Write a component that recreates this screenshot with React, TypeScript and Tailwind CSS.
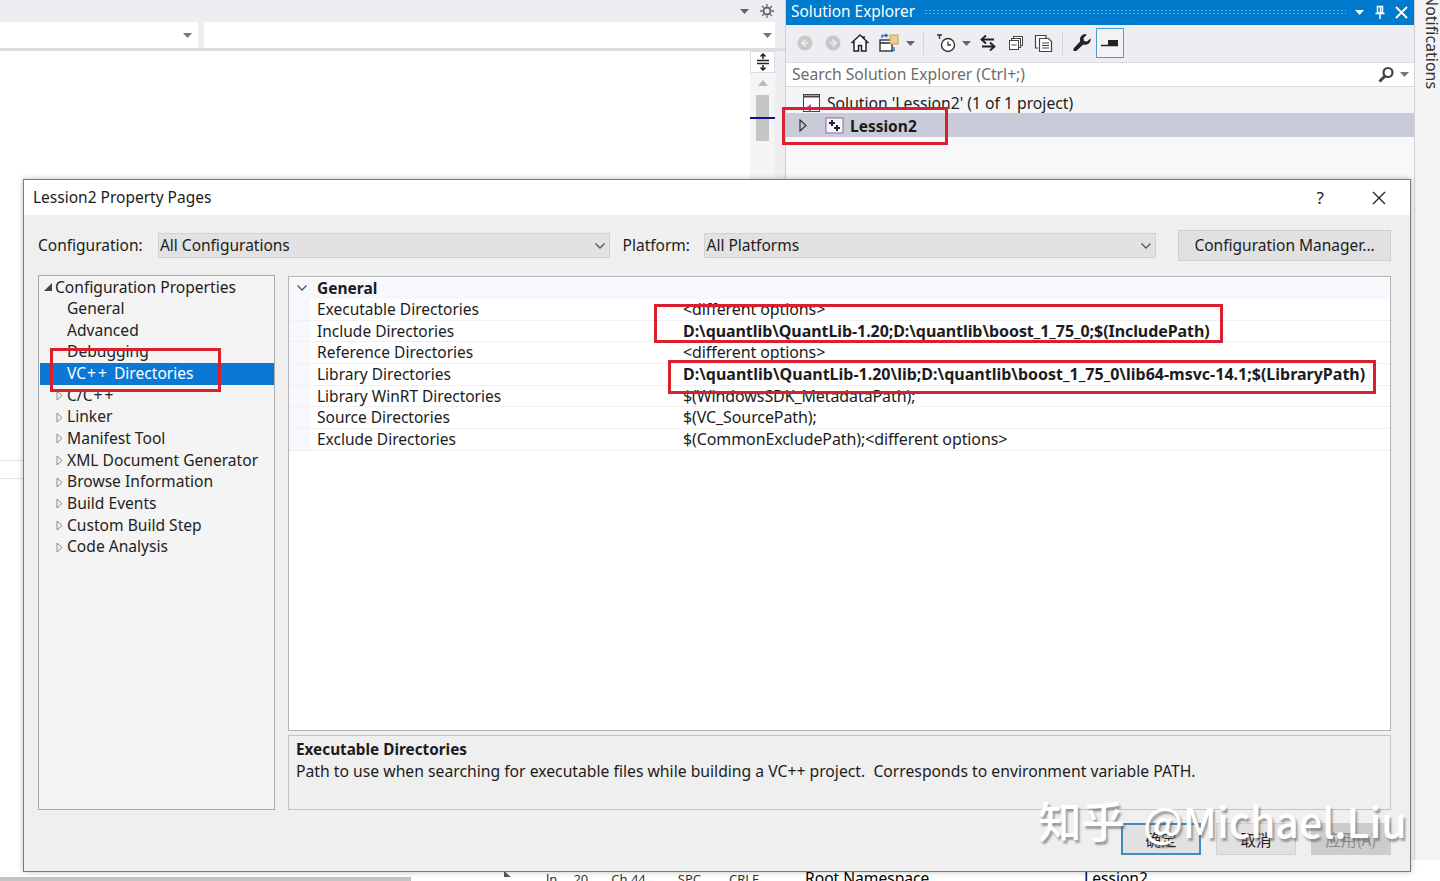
import React from "react";

const font = { fontFamily: '"Noto Sans","Noto Sans CJK SC",sans-serif' };

const treeItems = [
  { t: "General", a: false },
  { t: "Advanced", a: false },
  { t: "Debugging", a: false },
  { t: "VC++ Directories", a: false, sel: true },
  { t: "C/C++", a: true },
  { t: "Linker", a: true },
  { t: "Manifest Tool", a: true },
  { t: "XML Document Generator", a: true },
  { t: "Browse Information", a: true },
  { t: "Build Events", a: true },
  { t: "Custom Build Step", a: true },
  { t: "Code Analysis", a: true },
];

const props = [
  { k: "Executable Directories", v: "<different options>", c: "tracking-[-0.1px]" },
  { k: "Include Directories", v: "D:\\quantlib\\QuantLib-1.20;D:\\quantlib\\boost_1_75_0;$(IncludePath)", c: "font-bold tracking-[-0.07px]" },
  { k: "Reference Directories", v: "<different options>", c: "tracking-[-0.1px]" },
  { k: "Library Directories", v: "D:\\quantlib\\QuantLib-1.20\\lib;D:\\quantlib\\boost_1_75_0\\lib64-msvc-14.1;$(LibraryPath)", c: "font-bold" },
  { k: "Library WinRT Directories", v: "$(WindowsSDK_MetadataPath);", c: "tracking-[-0.1px]" },
  { k: "Source Directories", v: "$(VC_SourcePath);", c: "tracking-[-0.1px]" },
  { k: "Exclude Directories", v: "$(CommonExcludePath);<different options>", c: "tracking-[-0.1px]" },
];

function PlusText({ t }: { t: string }) {
  const i = t.indexOf("++");
  if (i < 0) return <>{t}</>;
  return (
    <>
      {t.slice(0, i)}
      <span className="px-[1px] tracking-[2px]">++</span>
      {t.slice(i + 2)}
    </>
  );
}

function Chevron() {
  return (
    <svg width="12" height="8" viewBox="0 0 12 8" className="text-[#555]">
      <path d="M1.5 1.5 6 6l4.500-4.500" fill="none" stroke="currentColor" strokeWidth="1.3" />
    </svg>
  );
}

function Tri() {
  return (
    <svg width="7" height="11" viewBox="0 0 7 11" className="shrink-0">
      <path d="M1 1l5 4.500L1 10z" fill="none" stroke="#8a8a8a" strokeWidth="1" />
    </svg>
  );
}

function Drop({ c = "#555" }: { c?: string }) {
  return (
    <svg width="9" height="5" viewBox="0 0 9 5">
      <path d="M0 0h9L4.500 5z" fill={c} />
    </svg>
  );
}

function Toolbar() {
  return (
    <div className="flex h-[37px] items-center bg-[#eeeef2] pb-[1px] pl-[11px]">
      <svg width="16" height="16" viewBox="0 0 16 16">
        <circle cx="8" cy="8" r="7.500" fill="#c8c8c8" />
        <path d="M8.500 4.500 5 8l3.500 3.500M5 8h6.500" fill="none" stroke="#eee" strokeWidth="1.600" />
      </svg>
      <svg width="16" height="16" viewBox="0 0 16 16" className="ml-[12px]">
        <circle cx="8" cy="8" r="7.500" fill="#c8c8c8" />
        <path d="M7.500 4.500 11 8l-3.500 3.500M11 8H4.500" fill="none" stroke="#eee" strokeWidth="1.600" />
      </svg>
      <svg width="20" height="20" viewBox="0 0 20 20" className="ml-[9px]">
        <path d="M1.500 10 10 2l8.500 8M4 8.500V18h4.500v-5.500h3V18H16V8.500M14 3v3" fill="#fff" stroke="#222" strokeWidth="1.500" />
      </svg>
      <svg width="22" height="20" viewBox="0 0 22 20" className="ml-[9px]">
        <rect x="1" y="7" width="12" height="11" fill="#fff" stroke="#333" strokeWidth="1.400" />
        <path d="M1 10h12" stroke="#333" strokeWidth="1.600" />
        <rect x="11" y="2" width="8" height="9" fill="#e9cf92" stroke="#c9a24d" />
        <path d="M3 5V2.500h5M6.500 1 8.500 2.500 6.500 4M15 14v3.500h-2" fill="none" stroke="#1f6fb5" strokeWidth="1.300" />
      </svg>
      <span className="ml-[5px] flex"><Drop c="#666" /></span>
      <span className="ml-[8px] h-[24px] w-px bg-[#d4d4d8]" />
      <svg width="22" height="20" viewBox="0 0 22 20" className="ml-[12px]">
        <circle cx="12" cy="12" r="6.500" fill="#fff" stroke="#333" strokeWidth="1.400" />
        <path d="M12 8.500V12h3M1 2h5M3.500 2v4" fill="none" stroke="#333" strokeWidth="1.300" />
      </svg>
      <span className="ml-[4px] flex"><Drop c="#666" /></span>
      <svg width="18" height="18" viewBox="0 0 18 18" className="ml-[8px]">
        <path d="M7 1.500 2.500 5.500 7 9.500M3 5.500h12M11 8.500l4.500 4-4.500 4M15 12.500H3" fill="none" stroke="#222" strokeWidth="1.800" />
      </svg>
      <svg width="16" height="16" viewBox="0 0 16 16" className="ml-[11px]">
        <rect x="5.500" y="1.500" width="9" height="9" fill="#fff" stroke="#444" />
        <rect x="3.500" y="3.500" width="9" height="9" fill="#fff" stroke="#444" />
        <rect x="1.500" y="5.500" width="9" height="9" fill="#fff" stroke="#444" />
        <path d="M3.500 10h5" stroke="#444" />
      </svg>
      <svg width="20" height="20" viewBox="0 0 20 20" className="ml-[10px]">
        <path d="M4 15H1.500V2.500H12V5" fill="#fff" stroke="#444" strokeWidth="1.200" />
        <path d="M5.500 5.500h9l3 3v10h-12z" fill="#fff" stroke="#444" strokeWidth="1.200" />
        <path d="M8 10h7M8 12.500h7M8 15h7" stroke="#444" />
      </svg>
      <span className="ml-[8px] h-[24px] w-px bg-[#d4d4d8]" />
      <svg width="20" height="20" viewBox="0 0 20 20" className="ml-[9px]">
        <path d="M18.500 5.500 15 8.500 12 8l-.5-3L15 1.500C11.500.5 8 2.500 8 6.500c0 .8.100 1.300.300 1.800L1.500 15.500v2.500h2.800l7-6.500c3.700 1.200 8.300-1.800 7.200-6z" fill="#222" />
      </svg>
      <span className="ml-[4px] flex h-[30px] w-[28px] items-center justify-center border border-[#4f9bcb] bg-[#f3f3f6]">
        <svg width="18" height="8" viewBox="0 0 18 8">
          <path d="M0 6.500h17" stroke="#222" strokeWidth="1.500" />
          <rect x="7" y="1" width="10" height="5.500" fill="#222" />
        </svg>
      </span>
    </div>
  );
}

function SolutionExplorer() {
  return (
    <div className="flex h-full w-[630px] flex-col border-l border-[#cfcfd4] bg-white">
      <div className="flex h-[25px] items-center bg-[#007acc] pb-[1px] pl-[5px] pr-[6px] text-[15.400px] text-white">
        <span>Solution Explorer</span>
        <span className="mx-[9px] h-[7px] flex-1 bg-[radial-gradient(#5cb3e8_1px,transparent_1px)] bg-[length:4px_3px]" />
        <Drop c="#fff" />
        <svg width="12" height="15" viewBox="0 0 12 15" className="ml-[10px]">
          <path d="M3.500 1.500h5v6.500h-5zM1.500 8.500h9M6 8.500V14M6.500 2v6" fill="none" stroke="#fff" strokeWidth="1.500" />
        </svg>
        <svg width="13" height="13" viewBox="0 0 13 13" className="ml-[9px]">
          <path d="m1 1 11 11M12 1 1 12" stroke="#fff" strokeWidth="1.800" />
        </svg>
      </div>
      <Toolbar />
      <div className="flex h-[25px] items-center border-y border-[#dcdce0] bg-white pl-[6px] pr-[5px] text-[15.700px] text-[#6d6d6d]">
        <span className="flex-1">Search Solution Explorer (Ctrl+;)</span>
        <svg width="18" height="18" viewBox="0 0 18 18">
          <circle cx="11" cy="6.500" r="4.500" fill="none" stroke="#444" strokeWidth="2.200" />
          <path d="M8 10 2.500 15.500" stroke="#444" strokeWidth="3" />
        </svg>
        <span className="ml-[5px] flex"><Drop c="#777" /></span>
      </div>
      <div className="flex h-[26px] items-end bg-[#f5f5f7] pl-[16px] text-[15.700px] text-[#222]">
        <svg width="19" height="19" viewBox="0 0 19 19" className="shrink-0">
          <rect x="1.500" y="0.500" width="16" height="17" fill="#fff" stroke="#444" />
          <path d="M1.500 2.500h16" stroke="#444" strokeWidth="2" />
          <path d="M9 10 3.500 14 9 18z" fill="#b04ac0" />
        </svg>
        <span className="ml-[6px] leading-[19px]">Solution 'Lession2' (1 of 1 project)</span>
      </div>
      <div className="flex h-[24px] items-center bg-[#c9ccd8] pl-[13px] text-[15.500px] font-bold text-[#1c1c1c]">
        <svg width="8" height="13" viewBox="0 0 8 13">
          <path d="M1 1l6 5.500L1 12z" fill="none" stroke="#333" strokeWidth="1.200" />
        </svg>
        <svg width="19" height="17" viewBox="0 0 19 17" className="ml-[18px]">
          <rect x="1" y="1" width="17" height="15" fill="#f7f3fa" stroke="#8d6aa4" />
          <path d="M4 6h6M7 3v6M9 11h6M12 8v6" stroke="#222" strokeWidth="2" />
        </svg>
        <span className="ml-[6px] pt-[3px]">Lession2</span>
      </div>
      <div className="flex-1 bg-[#f8f8fa]" />
    </div>
  );
}

function TopLeft() {
  return (
    <div className="flex h-full flex-1 flex-col bg-white">
      <div className="flex h-[22px] items-center justify-end gap-[11px] bg-[#eeeef2] pr-[11px]">
        <Drop c="#666" />
        <svg width="14" height="14" viewBox="0 0 14 14">
          <circle cx="7" cy="7" r="3.500" fill="none" stroke="#666" strokeWidth="2" />
          <path d="M7 0v14M0 7h14M2 2l10 10M12 2 2 12" stroke="#666" strokeWidth="1.300" strokeDasharray="2.500 9 2.500" />
        </svg>
      </div>
      <div className="flex h-[29px] gap-[6px] border-b-[3px] border-[#dcdce0] bg-[#eeeef2]">
        <div className="flex w-[198px] items-center justify-end bg-white pr-[6px]"><Drop c="#777" /></div>
        <div className="flex w-[571px] items-center justify-end bg-white pr-[3px]"><Drop c="#777" /></div>
      </div>
      <div className="flex flex-1">
        <div className="flex w-[750px] flex-col bg-white">
          <div className="mt-[409px] h-px bg-[#e6e6e6]" />
          <div className="mt-[17px] h-px bg-[#e6e6e6]" />
        </div>
        <div className="flex w-[25px] flex-col items-center bg-[#f5f5f5]">
          <div className="flex h-[22px] w-full items-center justify-center border border-[#dcdce0] bg-white">
            <svg width="14" height="18" viewBox="0 0 14 18">
              <path d="M1 7.500h12M1 10.500h12M7 1v5M7 12v5M4.500 3.500 7 1l2.500 2.500M4.500 14.500 7 17l2.500-2.500" fill="none" stroke="#222" strokeWidth="1.500" />
            </svg>
          </div>
          <svg width="10" height="6" viewBox="0 0 10 6" className="mt-[7px]"><path d="M0 6h10L5 0z" fill="#bbb" /></svg>
          <div className="relative mt-[9px] h-[46px] w-[13px] bg-[#c5c5c8]">
            <div className="absolute left-[-6px] top-[22px] h-[2px] w-[25px] bg-[#11118f]" />
          </div>
        </div>
        <div className="w-[10px] bg-[#eeeef2]" />
      </div>
    </div>
  );
}

function Dialog() {
  return (
    <div className="absolute left-[23px] top-[179px] flex h-[693px] w-[1388px] flex-col border border-[#7a7a7a] bg-[#efefef] text-[15.500px] leading-[21.670px] text-[#1c1c1c] shadow-[0_0_6px_rgba(0,0,0,0.25)]">
      <div className="flex h-[35px] shrink-0 items-center bg-white pl-[9px] pr-[24px]">
        <span className="flex-1">Lession2 Property Pages</span>
        <span className="mr-[48px] text-[17px]">?</span>
        <svg width="14" height="14" viewBox="0 0 14 14"><path d="m1 1 12 12M13 1 1 13" stroke="#222" strokeWidth="1.300" /></svg>
      </div>
      <div className="flex h-[60px] shrink-0 items-center pl-[14px] pr-[19px] pt-[1px]">
        <span className="w-[120px]">Configuration:</span>
        <div className="flex h-[25px] w-[452px] items-center border border-[#d2d2d2] bg-[#e2e2e2] pl-[1px] pr-[3px]">
          <span className="flex-1">All Configurations</span><Chevron />
        </div>
        <span className="ml-[13px] w-[81px]">Platform:</span>
        <div className="flex h-[25px] w-[453px] items-center border border-[#d2d2d2] bg-[#e2e2e2] pl-[2px] pr-[3px]">
          <span className="flex-1">All Platforms</span><Chevron />
        </div>
        <div className="ml-[22px] flex h-[31px] w-[213px] items-center justify-center border border-[#cfcfcf] bg-[#e1e1e1]">Configuration Manager...</div>
      </div>
      <div className="flex h-[535px] shrink-0 pl-[14px] pr-[19px]">
        <div className="flex w-[237px] flex-col border border-[#a9a9a9] bg-[#f4f4f4] pt-[0.500px] text-[15.600px]">
          <div className="flex h-[21.670px] items-center pl-[5px]">
            <svg width="8" height="8" viewBox="0 0 8 8" className="mr-[3px]"><path d="M8 0v8H0z" fill="#444" /></svg>
            <span>Configuration Properties</span>
          </div>
          {treeItems.map((it) => (
            <div key={it.t} className={`flex h-[21.670px] shrink-0 items-center ${it.sel ? "ml-[1px] bg-[#0a78d4] text-white" : "text-[#222]"}`}>
              <span className={`flex justify-end ${it.sel ? "w-[23px]" : "w-[24px]"}`}>{it.a && <Tri />}</span>
              <span className="ml-[4px]"><PlusText t={it.t} /></span>
            </div>
          ))}
        </div>
        <div className="ml-[13px] flex flex-1 flex-col pt-[1px]">
          <div className="h-[455px] border border-[#b4b4b4] bg-white pt-[0.500px]">
            <div className="flex h-[21.670px] items-center bg-[#f6f8fb] pl-[7px] font-bold">
              <Chevron />
              <span className="ml-[9px]">General</span>
            </div>
            {props.map((p) => (
              <div key={p.k} className="flex h-[21.670px] border-b border-[#f1f1f1] bg-white">
                <div className="w-[21px] bg-[#f6f8fb]" />
                <span className="w-[373px] pl-[7px]">{p.k}</span>
                <span className={`text-[16px] ${p.c}`}>{p.v}</span>
              </div>
            ))}
          </div>
          <div className="mt-[4px] h-[75px] border border-[#c4c4c4] bg-[#efefef] px-[7px] pt-[3px]">
            <div className="text-[15.300px] font-bold">Executable Directories</div>
            <div className="text-[15.720px]">Path to use when searching for executable files while building a VC++ project.&nbsp; Corresponds to environment variable PATH.</div>
          </div>
        </div>
      </div>
      <div className="flex flex-1 justify-end gap-[15px] pl-[14px] pr-[19px] pt-[13px] [font-family:'Noto_Sans_CJK_SC',sans-serif]">
        <div className="flex h-[32px] w-[80px] items-center justify-center border-2 border-[#3f8dbf] bg-[#e1e1e1] pt-[2px]">确定</div>
        <div className="flex h-[32px] w-[80px] items-center justify-center border border-[#d0d0d0] bg-[#e1e1e1] pt-[2px]">取消</div>
        <div className="flex h-[32px] w-[80px] items-center justify-center bg-[#cccccc] pt-[2px] text-[#8a8a8a]">应用(A)</div>
      </div>
    </div>
  );
}

export default function App() {
  return (
    <div className="relative flex h-[881px] w-[1440px] flex-col overflow-hidden bg-white" style={font}>
      <div className="flex h-[860px]">
        <TopLeft />
        <SolutionExplorer />
        <div className="relative w-[26px] border-l border-[#cfcfd4] bg-[#f4f4f6]">
          <span className="absolute left-[6px] top-[-6px] text-[16px] leading-[22px] text-[#333] [writing-mode:vertical-rl]">Notifications</span>
        </div>
      </div>
      <div className="flex h-[21px] items-end">
        <div className="h-[4px] w-[411px] bg-[#c4c4c4]" />
        <div className="flex w-[364px] items-end text-[13px] leading-[4px] text-[#333]">
          <svg width="8" height="10" viewBox="0 0 8 10" className="ml-[93px] shrink-0"><path d="M0 0l7 6H0z" fill="#555" /></svg>
          <span className="ml-[34px]">ln</span>
          <span className="ml-[16px]">20</span><span className="ml-[23px]">Ch 44</span><span className="ml-[32px]">SPC</span><span className="ml-[28px]">CRLF</span>
        </div>
        <div className="ml-[30px] w-[279px] text-[15.600px] leading-[6px]">Root Namespace</div>
        <div className="text-[15.600px] leading-[6px]">Lession2</div>
      </div>
      <Dialog />
      <div className="absolute left-[782px] top-[107px] h-[38px] w-[166px] border-[3px] border-[#dc1f2e]" />
      <div className="absolute left-[50px] top-[348px] h-[44px] w-[171px] border-[3px] border-[#dc1f2e]" />
      <div className="absolute left-[654px] top-[304px] h-[39px] w-[569px] border-[3px] border-[#dc1f2e]" />
      <div className="absolute left-[668px] top-[360px] h-[34px] w-[708px] border-[3px] border-[#dc1f2e]" />
      <div className="absolute left-[1038px] top-[790px] whitespace-nowrap text-[43.500px] font-medium leading-[60px] text-white [font-family:'Noto_Sans_CJK_SC',sans-serif] [text-shadow:2px_3px_2px_rgba(90,90,90,0.55)]">
        知乎<span className="ml-[18px] text-[41px]">@Michael.Liu</span>
      </div>
    </div>
  );
}
